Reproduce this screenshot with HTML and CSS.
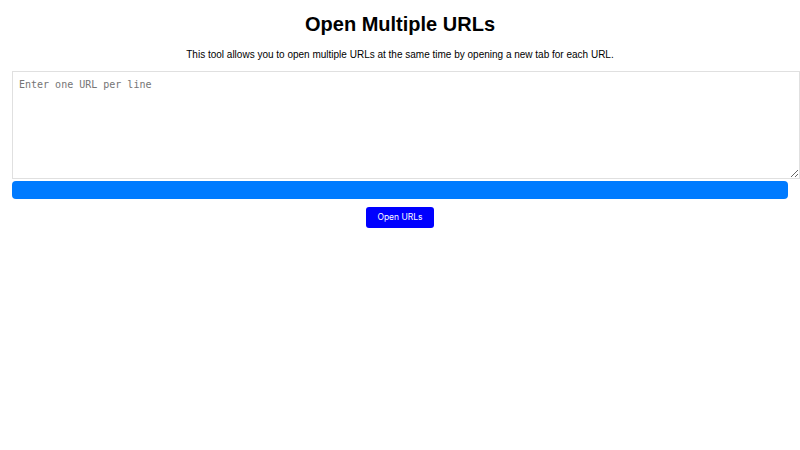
FILE: index.html
```html
<!DOCTYPE html>
<html lang="en">
<head>
  <meta charset="UTF-8" />
  <meta name="viewport" content="width=device-width, initial-scale=1.0" />
  <title>Open Multiple URLs</title>
  <link rel="stylesheet" href="styles.css">
</head>
<body>
  <div class="container">
    <h1>Open Multiple URLs</h1>
    <p class="intro">This tool allows you to open multiple URLs at the same time by opening a new tab for each URL.</p>

    <textarea id="urls" class="url-input" placeholder="Enter one URL per line"></textarea>
    <div class="progress"><div class="progress-fill" style="width: 100%"></div></div>

    <div class="actions">
      <button class="open-btn" onclick="openUrls()">Open URLs</button>
    </div>
  </div>

  <script>
    function openUrls() {
      const lines = document.getElementById("urls").value.split("\n");
      lines.map(l => l.trim()).filter(Boolean).forEach(url => window.open(url, "_blank"));
    }
  </script>
</body>
</html>
```

FILE: styles.css
```css
body {
  margin: 0;
  font-family: "Liberation Sans", Arial, sans-serif;
  color: #000;
  background: #fff;
}

.container {
  padding: 0 12px;
}

h1 {
  font-size: 20px;
  line-height: 24px;
  margin: 12px 0;
  text-align: center;
}

.intro {
  font-size: 10px;
  line-height: 14px;
  margin: 12px 0 9px;
  text-align: center;
}

.url-input {
  display: block;
  box-sizing: border-box;
  width: calc(100% + 12px);
  height: 108px;
  margin: 0 0 2px;
  padding: 6px;
  border: 1px solid #e0e0e0;
  font-family: "DejaVu Sans Mono", monospace;
  font-size: 10px;
  line-height: 14px;
}

.url-input::placeholder {
  color: #757575;
}

.progress {
  height: 18px;
  border-radius: 4px;
  background: #e9ecef;
  overflow: hidden;
}

.progress-fill {
  height: 100%;
  background: #007bff;
}

.actions {
  text-align: center;
  margin-top: 7px;
}

.open-btn {
  width: 68px;
  height: 21px;
  padding: 0;
  border: none;
  border-radius: 3px;
  background: #0000ff;
  color: #fff;
  font-family: Inter, sans-serif;
  font-size: 8.5px;
  cursor: pointer;
}
```
